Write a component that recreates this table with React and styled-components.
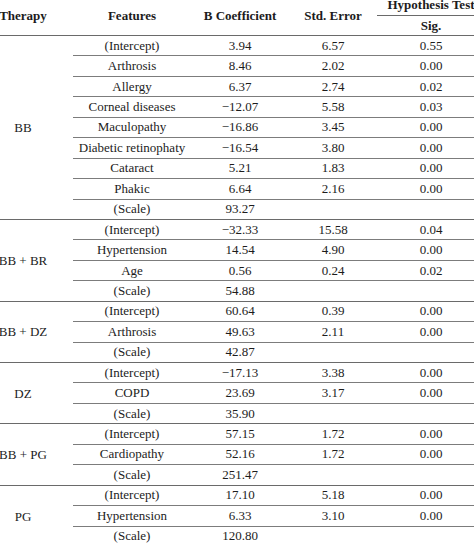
import React from "react";
import styled, { createGlobalStyle } from "styled-components";

const Global = createGlobalStyle`
  html, body { margin: 0; padding: 0; background: #ffffff; }
  body { font-family: "Liberation Serif", "Times New Roman", serif; color: #1c1c1c; }
`;

const Frame = styled.div`
  width: 474px;
  height: 544px;
  overflow: hidden;
  background: #ffffff;
`;

const Table = styled.table`
  margin: -5px 0 0 -27px;
  border-collapse: collapse;
  table-layout: fixed;
  width: 560px;
  font-size: 13px;
  line-height: 1;
`;

const Col = styled.col`
  width: ${(p) => p.$w}px;
`;

const HeadCell = styled.th`
  font-weight: bold;
  text-align: center;
  vertical-align: middle;
  padding: 0;
  height: 19.5px;
  white-space: nowrap;
  border-bottom: ${(p) => (p.$rule ? "1px solid #6a6a6a" : "none")};
`;

const Row = styled.tr`
  height: 20.45px;
`;

const TherapyCell = styled.td`
  text-align: center;
  vertical-align: middle;
  padding: 0;
  white-space: nowrap;
  border-top: 1px solid #6a6a6a;
`;

const Cell = styled.td`
  text-align: center;
  vertical-align: middle;
  padding: 0 0 1px;
  white-space: nowrap;
  border-top: 1px solid ${(p) => (p.$first ? "#6a6a6a" : "#7c7c7c")};
`;

const groups = [
  {
    therapy: "BB",
    rows: [
      ["(Intercept)", "3.94", "6.57", "0.55"],
      ["Arthrosis", "8.46", "2.02", "0.00"],
      ["Allergy", "6.37", "2.74", "0.02"],
      ["Corneal diseases", "\u221212.07", "5.58", "0.03"],
      ["Maculopathy", "\u221216.86", "3.45", "0.00"],
      ["Diabetic retinophaty", "\u221216.54", "3.80", "0.00"],
      ["Cataract", "5.21", "1.83", "0.00"],
      ["Phakic", "6.64", "2.16", "0.00"],
      ["(Scale)", "93.27", "", ""],
    ],
  },
  {
    therapy: "BB + BR",
    rows: [
      ["(Intercept)", "\u221232.33", "15.58", "0.04"],
      ["Hypertension", "14.54", "4.90", "0.00"],
      ["Age", "0.56", "0.24", "0.02"],
      ["(Scale)", "54.88", "", ""],
    ],
  },
  {
    therapy: "BB + DZ",
    rows: [
      ["(Intercept)", "60.64", "0.39", "0.00"],
      ["Arthrosis", "49.63", "2.11", "0.00"],
      ["(Scale)", "42.87", "", ""],
    ],
  },
  {
    therapy: "DZ",
    rows: [
      ["(Intercept)", "\u221217.13", "3.38", "0.00"],
      ["COPD", "23.69", "3.17", "0.00"],
      ["(Scale)", "35.90", "", ""],
    ],
  },
  {
    therapy: "BB + PG",
    rows: [
      ["(Intercept)", "57.15", "1.72", "0.00"],
      ["Cardiopathy", "52.16", "1.72", "0.00"],
      ["(Scale)", "251.47", "", ""],
    ],
  },
  {
    therapy: "PG",
    rows: [
      ["(Intercept)", "17.10", "5.18", "0.00"],
      ["Hypertension", "6.33", "3.10", "0.00"],
      ["(Scale)", "120.80", "", ""],
    ],
  },
];

export default function App() {
  return (
    <>
      <Global />
      <Frame>
        <Table>
          <colgroup>
            <Col $w={100} />
            <Col $w={118} />
            <Col $w={98} />
            <Col $w={88} />
            <Col $w={108} />
            <Col $w={48} />
          </colgroup>
          <thead>
            <tr>
              <HeadCell rowSpan={2}>Therapy</HeadCell>
              <HeadCell rowSpan={2}>Features</HeadCell>
              <HeadCell rowSpan={2}>B Coefficient</HeadCell>
              <HeadCell rowSpan={2}>Std. Error</HeadCell>
              <HeadCell $rule>Hypothesis Test</HeadCell>
              <HeadCell $rule />
            </tr>
            <tr>
              <HeadCell>Sig.</HeadCell>
              <HeadCell />
            </tr>
          </thead>
          <tbody>
            {groups.map((g) =>
              g.rows.map((r, i) => (
                <Row key={g.therapy + i}>
                  {i === 0 && (
                    <TherapyCell rowSpan={g.rows.length}>{g.therapy}</TherapyCell>
                  )}
                  {r.map((v, j) => (
                    <Cell key={j} $first={i === 0}>
                      {v}
                    </Cell>
                  ))}
                  <Cell $first={i === 0} />
                </Row>
              ))
            )}
          </tbody>
        </Table>
      </Frame>
    </>
  );
}
